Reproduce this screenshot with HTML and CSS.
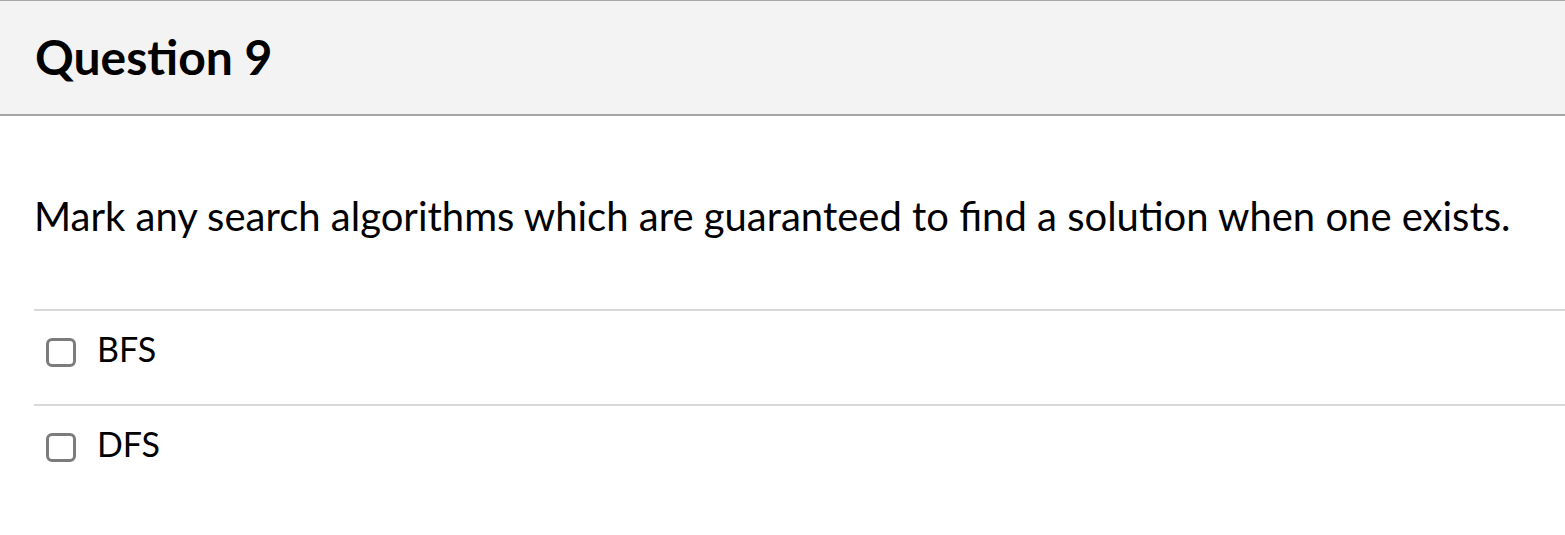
FILE: index.html
```html
<!DOCTYPE html>
<html>
<head>
<meta charset="utf-8">
<link rel="stylesheet" href="styles.css">
</head>
<body>
<div class="question">
  <div class="header"><h2 class="title">Question 9</h2></div>
  <div class="body">
    <p class="text">Mark any search algorithms which are guaranteed to find a solution when one exists.</p>
    <div class="answers">
      <label class="answer"><span class="box"></span><span class="label">BFS</span></label>
      <label class="answer"><span class="box"></span><span class="label">DFS</span></label>
    </div>
  </div>
</div>
</body>
</html>
```
FILE: styles.css
```css
html, body { margin: 0; padding: 0; background: #fff; }
body { font-family: Lato, "Noto Sans", sans-serif; color: #000; }
.question { width: 1565px; }
.header {
  border-top: 1px solid #a8a8a8;
  border-bottom: 2px solid #a5a5a5;
  background: #f3f3f3;
  height: 113px;
  box-sizing: content-box;
  padding-left: 35px;
}
.title { margin: 0; padding-top: 27px; font-size: 48px; font-weight: 700; line-height: 58px; }
.body { padding-left: 34px; }
.text { margin: 0; padding: 76px 0 69px 0; font-size: 40px; line-height: 48px; }
.answers { display: flex; flex-direction: column; }
.answer {
  border-top: 2px solid #d9d9d9;
  height: 93px;
  display: flex;
  align-items: flex-start;
  padding-left: 12px;
}
.box {
  width: 24px; height: 23px;
  border: 3px solid #7c7c7c;
  border-radius: 6px;
  margin-top: 27px;
  margin-right: 21px;
}
.label { font-size: 34px; line-height: 41px; margin-top: 17px; }
```
